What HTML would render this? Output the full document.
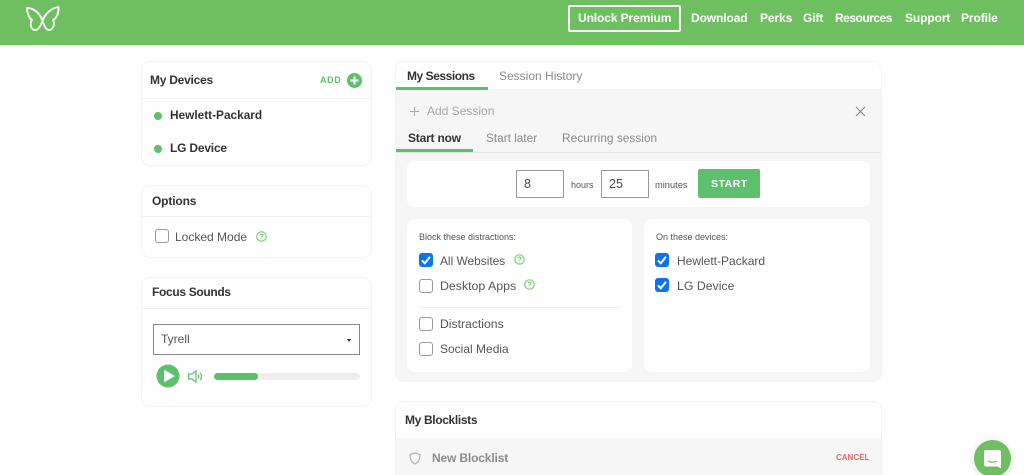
<!DOCTYPE html>
<html><head><meta charset="utf-8"><title>Dashboard</title>
<style>
html,body{margin:0;padding:0;background:#fff;width:1024px;height:475px;overflow:hidden}
body{position:relative;font-family:"Liberation Sans",sans-serif;color:#4a4a4a}
.a{position:absolute}
.t{position:absolute;white-space:nowrap;line-height:16px}
.b{font-weight:700}
.card{position:absolute;background:#fff;border:1px solid #f3f3f3;border-radius:9px;box-sizing:border-box}
.line{position:absolute;height:1px;background:#f1f1f1}
.cb{position:absolute;width:14px;height:14px;box-sizing:border-box;border:1px solid #999;border-radius:3px;background:#fff}
.cb.on{background:#0f72ee;border-color:#0f72ee}
.cb svg{position:absolute;left:-1px;top:-1px}
.nav{position:absolute;top:10px;color:#fff;font-size:12px;font-weight:700;line-height:16px;white-space:nowrap;letter-spacing:-.1px}
.input{position:absolute;box-sizing:border-box;height:28px;width:48px;top:170px;border:1px solid #999;background:#fff;font-size:12.5px;line-height:26px;padding-left:7px}
</style></head><body>

<div class="a" style="left:0;top:0;width:1024px;height:45px;background:#6dbf5f"></div>
<svg class="a" style="left:0;top:0" width="70" height="40" viewBox="0 0 70 40" fill="none" stroke="#fff" stroke-width="1.800" stroke-linejoin="round"><path d="M27 8C34 8 40 13 42.500 21C45 13 52 8 58.500 7C59 12 57 18 53 20C55 23 54 28 50 30C46 31 44 25 42.500 21C41 25 38 31 34 30C30 28 30 23 32 20C29 18 27 13 27 8Z"/></svg>
<div class="a" style="left:568px;top:5px;width:113px;height:27px;box-sizing:border-box;border:2px solid #fff;border-radius:2px"></div>
<div class="nav" style="left:578px">Unlock Premium</div>
<div class="nav" style="left:691px">Download</div>
<div class="nav" style="left:760px">Perks</div>
<div class="nav" style="left:803px">Gift</div>
<div class="nav" style="left:835px;letter-spacing:-.5px">Resources</div>
<div class="nav" style="left:905px">Support</div>
<div class="nav" style="left:961px">Profile</div>

<!-- My Devices -->
<div class="card" style="left:141px;top:61px;width:231px;height:105px"></div>
<div class="line" style="left:142px;top:98px;width:229px"></div>
<div class="t b" style="left:150px;top:72px;font-size:12px;letter-spacing:-.25px;color:#333">My Devices</div>
<div class="t b" style="left:320px;top:72px;font-size:9px;color:#5cc06c;letter-spacing:.6px">ADD</div>
<svg class="a" style="left:347px;top:73px" width="15" height="15" viewBox="0 0 15 15"><circle cx="7.500" cy="7.500" r="7.500" fill="#5cc06c"/><path d="M7.500 3.500V11.500M3.500 7.500H11.500" stroke="#fff" stroke-width="2"/></svg>
<div class="a" style="left:154px;top:112px;width:8px;height:8px;border-radius:50%;background:#5cc06c"></div>
<div class="t b" style="left:170px;top:107px;font-size:11.850px;color:#333">Hewlett-Packard</div>
<div class="a" style="left:154px;top:145px;width:8px;height:8px;border-radius:50%;background:#5cc06c"></div>
<div class="t b" style="left:170px;top:140px;font-size:12px;letter-spacing:-.2px;color:#333">LG Device</div>

<!-- Options -->
<div class="card" style="left:141px;top:185px;width:231px;height:73px"></div>
<div class="line" style="left:142px;top:216px;width:229px"></div>
<div class="t b" style="left:152px;top:193px;font-size:12px;letter-spacing:-.15px;color:#333">Options</div>
<div class="cb" style="left:155px;top:229px"></div>
<div class="t" style="left:175px;top:229px;font-size:12px;color:#555">Locked Mode</div>
<svg class="a" style="left:256px;top:231px" width="11" height="11" viewBox="0 0 11 11" fill="none" stroke="#7fcf78" stroke-width="1.200"><circle cx="5.500" cy="5.500" r="4.700"/><path d="M4 4.400C4 2.700 7 2.700 7 4.400C7 5.400 5.500 5.300 5.500 6.500M5.500 7.600V8.400"/></svg>

<!-- Focus Sounds -->
<div class="card" style="left:141px;top:277px;width:231px;height:130px"></div>
<div class="line" style="left:142px;top:308px;width:229px"></div>
<div class="t b" style="left:152px;top:284px;font-size:12px;letter-spacing:-.33px;color:#333">Focus Sounds</div>
<div class="a" style="left:153px;top:324px;width:207px;height:31px;box-sizing:border-box;border:1px solid #888"></div>
<div class="t" style="left:161px;top:331px;font-size:12px;color:#555">Tyrell</div>
<div class="a" style="left:347px;top:339px;width:0;height:0;border-left:2.500px solid transparent;border-right:2.500px solid transparent;border-top:3px solid #333"></div>
<svg class="a" style="left:156px;top:364px" width="24" height="24" viewBox="0 0 24 24"><circle cx="12" cy="12" r="11.500" fill="#5cc06c"/><path d="M8.500 6.500L18 12L8.500 17.500Z" fill="#fff" stroke="#fff" stroke-linejoin="round"/></svg>
<svg class="a" style="left:188px;top:370px" width="16" height="13" viewBox="0 0 16 13" fill="none" stroke="#5cc06c" stroke-width="1.200"><path d="M.6 4H4L8 1V12L4 9H.6Z"/><path d="M10 4.500C11 5.500 11 7.500 10 8.500M12 3C14 5 14 8 12 10"/></svg>
<div class="a" style="left:214px;top:373px;width:146px;height:7px;border-radius:4px;background:#eeeeee"></div>
<div class="a" style="left:214px;top:373px;width:44px;height:7px;border-radius:4px;background:#5cc06c"></div>

<!-- Sessions -->
<div class="card" style="left:395px;top:61px;width:487px;height:321px;overflow:hidden">
  <div class="a" style="left:0;top:27px;width:485px;height:292px;background:#f6f6f6"></div>
</div>
<div class="a" style="left:396px;top:87px;width:92px;height:3px;background:#5cc06c"></div>
<div class="t b" style="left:407px;top:68px;font-size:12px;letter-spacing:-.45px;color:#333">My Sessions</div>
<div class="t" style="left:499px;top:68px;font-size:12px;color:#8a8a8a">Session History</div>
<svg class="a" style="left:409px;top:106px" width="11" height="11" viewBox="0 0 11 11"><path d="M5.500 1V10M1 5.500H10" stroke="#aaa" stroke-width="1"/></svg>
<div class="t" style="left:427px;top:103px;font-size:12px;color:#a6a6a6">Add Session</div>
<svg class="a" style="left:855px;top:106px" width="11" height="11" viewBox="0 0 11 11"><path d="M1 1L10 10M10 1L1 10" stroke="#888" stroke-width="1.100"/></svg>
<div class="t b" style="left:408px;top:130px;font-size:12px;letter-spacing:-.2px;color:#333">Start now</div>
<div class="t" style="left:486px;top:130px;font-size:11.800px;color:#8a8a8a">Start later</div>
<div class="t" style="left:562px;top:130px;font-size:11.900px;color:#8a8a8a">Recurring session</div>
<div class="line" style="left:396px;top:152px;width:485px;background:#e6e6e6"></div>
<div class="a" style="left:396px;top:149px;width:77px;height:3px;background:#5cc06c"></div>

<div class="a" style="left:407px;top:161px;width:463px;height:46px;background:#fff;border-radius:8px"></div>
<div class="input" style="left:516px">8</div>
<div class="t" style="left:571px;top:177px;font-size:9px;color:#555">hours</div>
<div class="input" style="left:601px">25</div>
<div class="t" style="left:655px;top:177px;font-size:9.300px;color:#555">minutes</div>
<div class="a" style="left:698px;top:169px;width:62px;height:29px;background:#5cc06c;border-radius:2px"></div>
<div class="t b" style="left:711px;top:176px;font-size:10.500px;color:#fff;letter-spacing:.5px">START</div>

<div class="a" style="left:407px;top:219px;width:225px;height:153px;background:#fff;border-radius:8px"></div>
<div class="t" style="left:419px;top:229px;font-size:9px;color:#555">Block these distractions:</div>
<div class="cb on" style="left:419px;top:253px"><svg width="14" height="14" viewBox="0 0 14 14"><path d="M3 7.500L5.800 10.300L11 3.800" fill="none" stroke="#fff" stroke-width="2"/></svg></div>
<div class="t" style="left:440px;top:253px;font-size:11.900px;color:#555">All Websites</div>
<svg class="a" style="left:514px;top:254px" width="11" height="11" viewBox="0 0 11 11" fill="none" stroke="#7fcf78" stroke-width="1.200"><circle cx="5.500" cy="5.500" r="4.700"/><path d="M4 4.400C4 2.700 7 2.700 7 4.400C7 5.400 5.500 5.300 5.500 6.500M5.500 7.600V8.400"/></svg>
<div class="cb" style="left:419px;top:279px"></div>
<div class="t" style="left:440px;top:278px;font-size:12.350px;color:#555">Desktop Apps</div>
<svg class="a" style="left:524px;top:279px" width="11" height="11" viewBox="0 0 11 11" fill="none" stroke="#7fcf78" stroke-width="1.200"><circle cx="5.500" cy="5.500" r="4.700"/><path d="M4 4.400C4 2.700 7 2.700 7 4.400C7 5.400 5.500 5.300 5.500 6.500M5.500 7.600V8.400"/></svg>
<div class="line" style="left:419px;top:307px;width:202px"></div>
<div class="cb" style="left:419px;top:317px"></div>
<div class="t" style="left:440px;top:316px;font-size:12.200px;color:#555">Distractions</div>
<div class="cb" style="left:419px;top:342px"></div>
<div class="t" style="left:440px;top:341px;font-size:12px;color:#555">Social Media</div>

<div class="a" style="left:644px;top:219px;width:226px;height:153px;background:#fff;border-radius:8px"></div>
<div class="t" style="left:656px;top:229px;font-size:9px;color:#555">On these devices:</div>
<div class="cb on" style="left:655px;top:253px"><svg width="14" height="14" viewBox="0 0 14 14"><path d="M3 7.500L5.800 10.300L11 3.800" fill="none" stroke="#fff" stroke-width="2"/></svg></div>
<div class="t" style="left:677px;top:253px;font-size:12px;color:#555">Hewlett-Packard</div>
<div class="cb on" style="left:655px;top:278px"><svg width="14" height="14" viewBox="0 0 14 14"><path d="M3 7.500L5.800 10.300L11 3.800" fill="none" stroke="#fff" stroke-width="2"/></svg></div>
<div class="t" style="left:677px;top:278px;font-size:12.300px;color:#555">LG Device</div>

<!-- Blocklists -->
<div class="card" style="left:395px;top:401px;width:487px;height:90px;overflow:hidden">
  <div class="a" style="left:0;top:36px;width:485px;height:60px;background:#f6f6f6"></div>
</div>
<div class="t b" style="left:405px;top:412px;font-size:12px;letter-spacing:-.35px;color:#333">My Blocklists</div>
<svg class="a" style="left:409px;top:452px" width="12" height="13" viewBox="0 0 12 13" fill="none" stroke="#b5b5b5" stroke-width="1.200"><path d="M1 2.500L6 1L11 2.500C11 7 9.500 10.500 6 12C2.500 10.500 1 7 1 2.500Z"/></svg>
<div class="t b" style="left:432px;top:450px;font-size:12px;letter-spacing:-.15px;color:#8c8c8c">New Blocklist</div>
<div class="t b" style="left:836px;top:450px;font-size:8px;color:#df6b6b">CANCEL</div>

<!-- Chat -->
<div class="a" style="left:974px;top:440px;width:37px;height:37px;border-radius:50%;background:#6dbf5f;box-shadow:0 1px 8px rgba(0,0,0,.12)"></div>
<svg class="a" style="left:984px;top:450px" width="17" height="19" viewBox="0 0 17 19"><path d="M2 0H15Q17 0 17 2V18.500L13.500 16.500H2Q0 16.500 0 14.500V2Q0 0 2 0Z" fill="#fff"/><path d="M4 11Q8.500 13.500 13 11" fill="none" stroke="#6dbf5f" stroke-width="1.200"/></svg>

</body></html>
